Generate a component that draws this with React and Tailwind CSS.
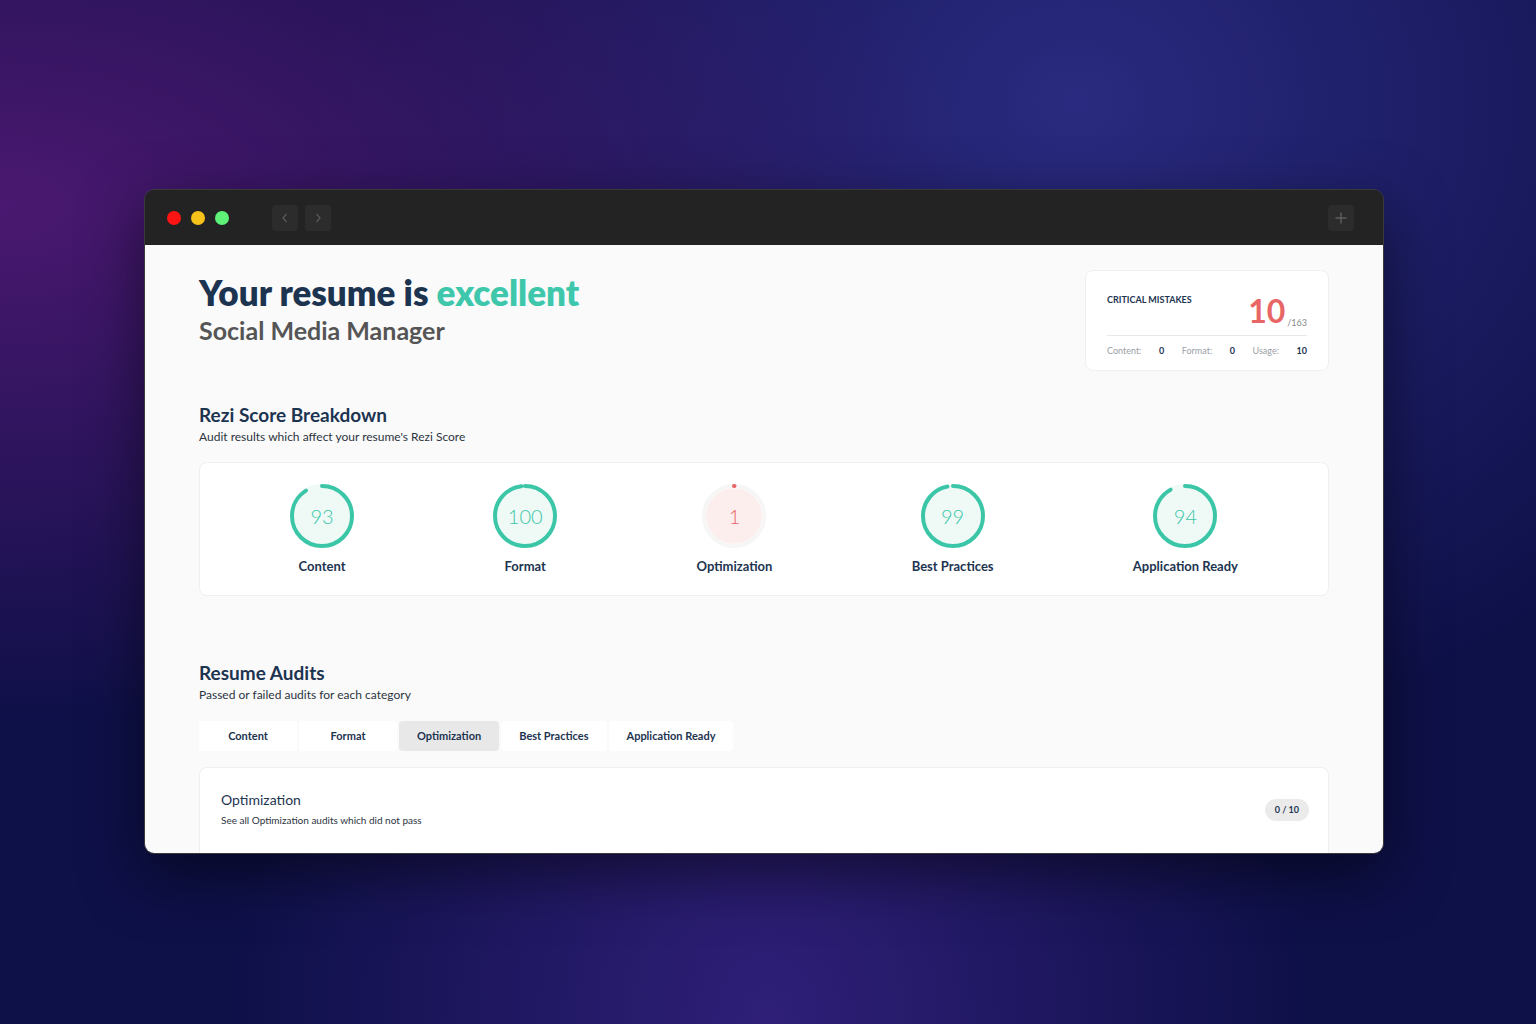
import React from "react";

const font = { fontFamily: "Lato, 'Noto Sans', sans-serif" };

function Ring({ value, color, fill, track }) {
  const r = 30;
  const c = 2 * Math.PI * r;
  const len = (value / 100) * c;
  return (
    <div className="relative w-[64px] h-[64px]">
      <svg width="64" height="64" viewBox="0 0 64 64" className="absolute inset-0">
        <circle cx="32" cy="32" r="28" fill={fill} />
        <circle cx="32" cy="32" r={r} fill="none" stroke={track} strokeWidth="4" />
        <circle
          cx="32"
          cy="32"
          r={r}
          fill="none"
          stroke={color}
          strokeWidth="4"
          strokeLinecap="round"
          strokeDasharray={`${Math.max(len - 4, 0.5)} ${c}`}
          transform="rotate(-90 32 32)"
        />
      </svg>
      <div
        className="absolute inset-0 flex items-center justify-center text-[20px] font-light"
        style={{ color }}
      >
        {value}
      </div>
    </div>
  );
}

const scores = [
  { label: "Content", value: 93 },
  { label: "Format", value: 100 },
  { label: "Optimization", value: 1, bad: true },
  { label: "Best Practices", value: 99 },
  { label: "Application Ready", value: 94 },
];

const tabs = ["Content", "Format", "Optimization", "Best Practices", "Application Ready"];

export default function App() {
  return (
    <div
      className="w-[1536px] h-[1024px] overflow-hidden bg-[#0e1048] bg-[radial-gradient(ellipse_at_0%_20%,#4a1870_0%,rgba(74,24,112,0)_45%),radial-gradient(ellipse_at_70%_10%,#2a2a80_0%,rgba(42,42,128,0)_50%),radial-gradient(ellipse_at_50%_100%,#2f1f78_0%,rgba(47,31,120,0)_50%)] pt-[189px] pl-[144px]"
      style={font}
    >
      <div className="w-[1240px] h-[665px] rounded-[10px] overflow-hidden flex flex-col shadow-[0_20px_60px_rgba(0,0,0,0.5)] border border-[#3a3a3a]">
        {/* title bar */}
        <div className="h-[55px] bg-[#232323] flex items-center pl-[22px] pr-[29px] shrink-0">
          <div className="flex gap-[10px]">
            <div className="w-[14px] h-[14px] rounded-full bg-[#ff1414]" />
            <div className="w-[14px] h-[14px] rounded-full bg-[#f7c21a]" />
            <div className="w-[14px] h-[14px] rounded-full bg-[#5ff279]" />
          </div>
          <div className="flex gap-[7px] ml-[43px]">
            <div className="w-[26px] h-[26px] rounded-[4px] bg-[#2c2c2c] flex items-center justify-center">
              <svg width="10" height="12" viewBox="0 0 10 12"><path d="M6.5 2 L3 6 L6.5 10" fill="none" stroke="#5a5a5a" strokeWidth="1.2" /></svg>
            </div>
            <div className="w-[26px] h-[26px] rounded-[4px] bg-[#2c2c2c] flex items-center justify-center">
              <svg width="10" height="12" viewBox="0 0 10 12"><path d="M3.5 2 L7 6 L3.5 10" fill="none" stroke="#5a5a5a" strokeWidth="1.2" /></svg>
            </div>
          </div>
          <div className="ml-auto w-[26px] h-[26px] rounded-[4px] bg-[#2c2c2c] flex items-center justify-center">
            <svg width="14" height="14" viewBox="0 0 14 14"><path d="M7 1.5 V12.5 M1.5 7 H12.5" stroke="#5e5e5e" strokeWidth="1.4" /></svg>
          </div>
        </div>

        {/* content */}
        <div className="flex-1 bg-[#fafafa] overflow-hidden px-[54px] pt-[25px]">
          <div className="flex justify-between items-start">
            <div className="pt-[1px]">
              <h1 className="text-[35px] leading-[42px] font-extrabold text-[#1d3451]">
                Your resume is <span className="text-[#3fc7ac]">excellent</span>
              </h1>
              <h2 className="text-[25px] leading-[30px] font-bold text-[#555555] mt-[2px]">Social Media Manager</h2>
            </div>
            <div className="w-[244px] h-[101px] bg-white rounded-[8px] border border-[#efefef] px-[21px] pt-[22px]">
              <div className="flex justify-between items-start h-[43px] border-b border-[#e8e8e8]">
                <div className="text-[9px] font-bold text-[#1d3451] leading-[12px] pt-[1px]">CRITICAL MISTAKES</div>
                <div className="flex items-end">
                  <span className="text-[32px] font-bold text-[#e86666] leading-[32px] mt-[2px]">10</span>
                  <span className="text-[9px] text-[#888] leading-[12px] ml-[2px] mb-[-2px]">/163</span>
                </div>
              </div>
              <div className="flex justify-between items-center text-[9px] leading-[12px] mt-[9px]">
                <span className="text-[#9aa0a6]">Content:</span>
                <span className="font-bold text-[#1d3451]">0</span>
                <span className="text-[#9aa0a6]">Format:</span>
                <span className="font-bold text-[#1d3451]">0</span>
                <span className="text-[#9aa0a6]">Usage:</span>
                <span className="font-bold text-[#1d3451]">10</span>
              </div>
            </div>
          </div>

          <div className="mt-[32px]">
            <h3 className="text-[19px] leading-[24px] font-bold text-[#1d3451]">Rezi Score Breakdown</h3>
            <p className="text-[12px] leading-[18px] text-[#2c3440] mt-[1px]">Audit results which affect your resume's Rezi Score</p>
          </div>

          <div className="mt-[16px] h-[134px] bg-white rounded-[8px] border border-[#efefef] flex justify-between items-start px-[90px] pt-[21px]">
            {scores.map((s) => (
              <div key={s.label} className="flex flex-col items-center">
                <Ring
                  value={s.value}
                  color={s.bad ? "#e86666" : "#3cc6a8"}
                  fill={s.bad ? "#fdeeee" : "#effaf7"}
                  track={s.bad ? "#f6f6f6" : "#effaf7"}
                />
                <div className="mt-[9px] text-[13px] leading-[18px] font-bold text-[#1d3451]">{s.label}</div>
              </div>
            ))}
          </div>

          <div className="mt-[65px]">
            <h3 className="text-[19px] leading-[24px] font-bold text-[#1d3451]">Resume Audits</h3>
            <p className="text-[12px] leading-[18px] text-[#2c3440] mt-[1px]">Passed or failed audits for each category</p>
          </div>

          <div className="mt-[17px] flex gap-[2px]">
            {tabs.map((t) => (
              <div
                key={t}
                className={
                  t === "Optimization"
                    ? "h-[30px] px-[18px] min-w-[98px] flex items-center justify-center rounded-[4px] bg-[#e8e8e8] text-[11px] font-bold text-[#1d3451]"
                    : "h-[30px] px-[18px] min-w-[98px] flex items-center justify-center rounded-[4px] bg-white text-[11px] font-bold text-[#1d3451]"
                }
              >
                {t}
              </div>
            ))}
          </div>

          <div className="mt-[16px] h-[120px] bg-white rounded-[8px] border border-[#efefef] px-[21px] pt-[23px] flex justify-between items-start">
            <div>
              <div className="text-[14px] leading-[18px] text-[#1d3451]">Optimization</div>
              <div className="text-[10px] leading-[14px] text-[#2c3440] mt-[4px]">See all Optimization audits which did not pass</div>
            </div>
            <div className="mt-[8px] mr-[-2px] h-[22px] px-[10px] rounded-full bg-[#ebebeb] flex items-center text-[9px] font-bold text-[#1d3451]">0 / 10</div>
          </div>
        </div>
      </div>
    </div>
  );
}
